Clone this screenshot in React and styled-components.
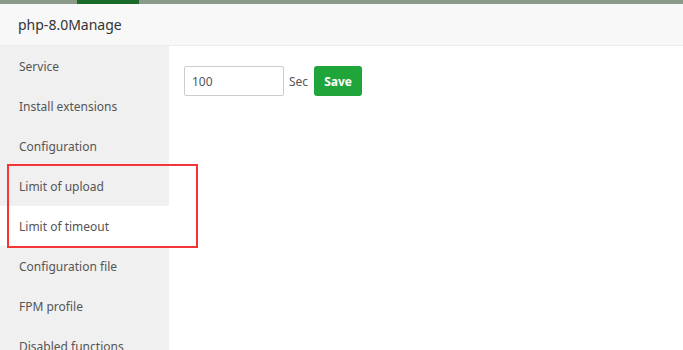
import {Component} from 'react'
import styled, {createGlobalStyle} from 'styled-components'

const GlobalStyle = createGlobalStyle`
  html, body {
    margin: 0;
    padding: 0;
    background: #ffffff;
    font-family: "Noto Sans", "Open Sans", sans-serif;
    overflow: hidden;
  }
`

const menu = [
  'Service',
  'Install extensions',
  'Configuration',
  'Limit of upload',
  'Limit of timeout',
  'Configuration file',
  'FPM profile',
  'Disabled functions',
]

export default class App extends Component {
  state = {
    active: 4,
    timeout: '100',
  }

  getTimeout = e => {
    this.setState({timeout: e.target.value})
  }

  render() {
    const {active, timeout} = this.state
    return (
      <Page>
        <GlobalStyle />
        <TopStrip>
          <StripTab />
        </TopStrip>
        <Header>php-8.0Manage</Header>
        <Body>
          <Sidebar>
            {menu.map((item, i) => (
              <MenuItem key={item} active={i === active}>
                {item}
              </MenuItem>
            ))}
            <Highlight />
          </Sidebar>
          <Content>
            <FormRow>
              <Input value={timeout} type="text" onChange={this.getTimeout} />
              <Unit>Sec</Unit>
              <SaveButton>Save</SaveButton>
            </FormRow>
          </Content>
        </Body>
      </Page>
    )
  }
}

const Page = styled.div`
  width: 683px;
  height: 350px;
  display: flex;
  flex-direction: column;
  overflow: hidden;
`

const TopStrip = styled.div`
  height: 4px;
  background-color: #8a9a88;
  padding-left: 77px;
  flex-shrink: 0;
`

const StripTab = styled.div`
  width: 62px;
  height: 4px;
  background-color: #1a6b2a;
`

const Header = styled.div`
  height: 41px;
  line-height: 41px;
  padding-left: 18px;
  background-color: #f8f8f8;
  border-bottom: 1px solid #ececec;
  color: #333333;
  font-size: 14px;
  flex-shrink: 0;
`

const Body = styled.div`
  flex: 1;
  display: flex;
`

const Sidebar = styled.div`
  position: relative;
  width: 169px;
  background-color: #f0f0f0;
  flex-shrink: 0;
`

const MenuItem = styled.div`
  height: 40px;
  line-height: 41px;
  padding-left: 19px;
  font-size: 12px;
  color: #555555;
  background-color: ${props => (props.active ? '#ffffff' : 'transparent')};
  white-space: nowrap;
`

const Highlight = styled.div`
  position: absolute;
  left: 7px;
  top: 118px;
  width: 187px;
  height: 80px;
  border: 2px solid #f53535;
  pointer-events: none;
`

const Content = styled.div`
  flex: 1;
  padding: 20px 15px;
`

const FormRow = styled.div`
  display: flex;
  align-items: center;
`

const Input = styled.input`
  box-sizing: border-box;
  width: 100px;
  height: 30px;
  padding: 0 7px;
  border: 1px solid #cccccc;
  border-radius: 2px;
  font-family: "Noto Sans", sans-serif;
  font-size: 12px;
  color: #555555;
  outline: none;
`

const Unit = styled.span`
  margin: 0 5px 0 5px;
  font-size: 12px;
  color: #555555;
`

const SaveButton = styled.button`
  height: 30px;
  width: 48px;
  padding: 0;
  margin-left: 1px;
  background-color: #20a53a;
  color: #ffffff;
  border: 0;
  border-radius: 3px;
  font-family: "Noto Sans", sans-serif;
  font-size: 12px;
  font-weight: bold;
  cursor: pointer;
`
